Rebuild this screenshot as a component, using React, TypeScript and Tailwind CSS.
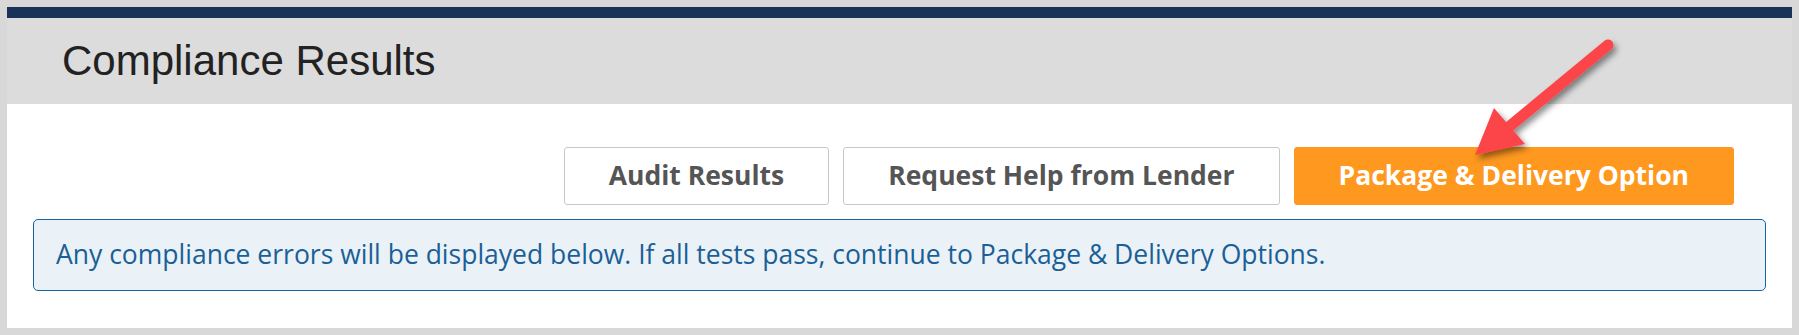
import React from 'react';

const BUTTONS = [
  { label: 'Audit Results', primary: false },
  { label: 'Request Help from Lender', primary: false },
  { label: 'Package & Delivery Option', primary: true },
];

function Arrow() {
  // annotation arrow drawn over the page
  return (
    <svg className="absolute left-0 top-0 pointer-events-none" width="1799" height="335" viewBox="0 0 1799 335">
      <defs>
        <filter id="arrowShadow" x="-20%" y="-20%" width="140%" height="140%">
          <feDropShadow dx="3" dy="4" stdDeviation="3" floodColor="#000" floodOpacity="0.45" />
        </filter>
      </defs>
      <g filter="url(#arrowShadow)">
        <line x1="1608" y1="45" x2="1510" y2="126" stroke="#fb4449" strokeWidth="11" strokeLinecap="round" />
        <polygon points="1475,155 1494,108 1525,144" fill="#fb4449" />
      </g>
    </svg>
  );
}

export default function App() {
  return (
    <div className="relative h-[335px] w-[1799px] bg-[#d8d8d8] p-[7px]">
      <div className="flex h-full flex-col border-t-[11px] border-[#1b3258] bg-white">
        {/* Header */}
        <div className="flex h-[86px] shrink-0 items-center bg-[#dcdcdc] pl-[55px]">
          <h1 className="text-[42px] leading-none text-[#222] font-['Liberation_Sans',Arial,sans-serif]">
            Compliance Results
          </h1>
        </div>

        {/* Body */}
        <div className="flex flex-col px-[26px] pt-[43px]">
          <div className="flex justify-end gap-[14px] pr-[32px]">
            {BUTTONS.map((b) => (
              <button
                key={b.label}
                className={
                  b.primary
                    ? "h-[58px] rounded-[3px] border border-[#fe981f] bg-[#fe981f] px-[44px] text-[26.5px] font-bold text-white font-['Open_Sans',sans-serif]"
                    : "h-[58px] rounded-[3px] border border-[#c9c9c9] bg-white px-[44px] text-[26.5px] font-bold text-[#555] font-['Open_Sans',sans-serif]"
                }
              >
                {b.label}
              </button>
            ))}
          </div>

          <div className="mt-[14px] flex h-[72px] items-center rounded-[5px] border-[1.5px] border-[#1565a3] bg-[#eaf2f7] px-[22px]">
            <p className="text-[26.5px] text-[#1b5f96] font-['Open_Sans',sans-serif]">
              Any compliance errors will be displayed below. If all tests pass, continue to Package &amp; Delivery Options.
            </p>
          </div>
        </div>
      </div>
      <Arrow />
    </div>
  );
}
